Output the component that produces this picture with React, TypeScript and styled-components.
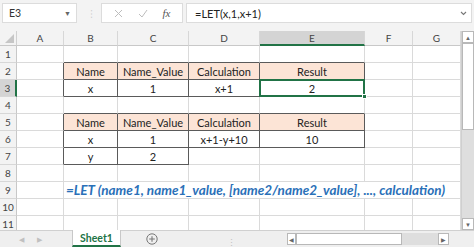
import React from 'react'
import styled, { createGlobalStyle } from 'styled-components'

const GlobalStyle = createGlobalStyle`
    html, body { margin: 0; padding: 0; background: #fff; }
    body { font-family: 'Lato', 'Liberation Sans', sans-serif; }
`

const GREEN = '#217346'
const GRID = '#dadada'
const DARK = '#5a5a5a'

const COLS = ['A', 'B', 'C', 'D', 'E', 'F', 'G']
const WIDTHS = [47, 54, 71, 71, 105, 48, 48]
const ROWS = 11

interface CellData {
    v: string
    head?: boolean
}

const CELLS: Record<string, CellData> = {
    B2: { v: 'Name', head: true },
    C2: { v: 'Name_Value', head: true },
    D2: { v: 'Calculation', head: true },
    E2: { v: 'Result', head: true },
    B3: { v: 'x' },
    C3: { v: '1' },
    D3: { v: 'x+1' },
    E3: { v: '2' },
    B5: { v: 'Name', head: true },
    C5: { v: 'Name_Value', head: true },
    D5: { v: 'Calculation', head: true },
    E5: { v: 'Result', head: true },
    B6: { v: 'x' },
    C6: { v: '1' },
    D6: { v: 'x+1-y+10' },
    E6: { v: '10' },
    B7: { v: 'y' },
    C7: { v: '2' },
}

const SYNTAX = '=LET (name1, name1_value, [name2/name2_value], ..., calculation)'

// col index: 0 = A
const boxed = (r: number, c: number): boolean =>
    ((r === 2 || r === 3 || r === 5 || r === 6) && c >= 1 && c <= 4) ||
    (r === 7 && c >= 1 && c <= 2)

const Screen = styled('div')`
    width: 474px;
    height: 247px;
    display: flex;
    flex-direction: column;
    overflow: hidden;
    background: #f3f3f3;
`

const FormulaBar = styled('div')`
    display: flex;
    align-items: center;
    height: 20px;
    padding: 3px 2px 8px 2px;
    gap: 3px;
`

const NameBox = styled('div')`
    width: 75px;
    height: 20px;
    box-sizing: border-box;
    background: #fff;
    border: 1px solid #dcdcdc;
    display: flex;
    align-items: center;
    justify-content: space-between;
    padding: 0 5px 0 6px;
    font-size: 10.5px;
    color: #333;
`

const Caret = styled('span')`
    font-size: 7px;
    color: #666;
`

const Grip = styled('div')`
    width: 18px;
    display: flex;
    justify-content: center;
    color: #c4c4c4;
    font-size: 10px;
    letter-spacing: -1px;
    writing-mode: vertical-rl;
`

const ActionBox = styled('div')`
    width: 82px;
    height: 20px;
    box-sizing: border-box;
    background: #fff;
    border: 1px solid #dcdcdc;
    display: flex;
    align-items: center;
    justify-content: space-around;
    padding: 0 4px;
`

const FxLabel = styled('span')`
    font-family: 'Liberation Serif', serif;
    font-style: italic;
    font-size: 11px;
    color: #555;
`

const FormulaInput = styled('div')`
    flex: 1;
    height: 20px;
    box-sizing: border-box;
    background: #fff;
    border: 1px solid #dcdcdc;
    display: flex;
    align-items: center;
    justify-content: space-between;
    padding: 0 4px 0 8px;
    font-size: 11px;
    color: #222;
`

const Main = styled('div')`
    display: flex;
    height: 199px;
    overflow: hidden;
`

const Sheet = styled('div')`
    display: grid;
    grid-template-columns: 17px ${WIDTHS.map((w) => `${w}px`).join(' ')};
    grid-template-rows: 15px repeat(${ROWS}, 17px);
    width: 461px;
    background: #fff;
    overflow: hidden;
`

const Corner = styled('div')`
    background: #f3f3f3;
    border-right: 1px solid #d0d0d0;
    border-bottom: 1px solid #c8c8c8;
    position: relative;
    &::after {
        content: '';
        position: absolute;
        right: 2px;
        bottom: 2px;
        border-left: 9px solid transparent;
        border-bottom: 9px solid #c6c6c6;
    }
`

const ColHead = styled('div')<{ $active?: boolean }>`
    background: ${({ $active }): string => ($active ? '#d4d4d4' : '#f3f3f3')};
    border-right: 1px solid #d7d7d7;
    border-bottom: ${({ $active }): string => ($active ? `2px solid ${GREEN}` : '1px solid #c8c8c8')};
    display: flex;
    align-items: center;
    justify-content: center;
    font-size: 10px;
    color: #444;
`

const RowHead = styled('div')<{ $active?: boolean }>`
    background: ${({ $active }): string => ($active ? '#d4d4d4' : '#f3f3f3')};
    border-right: ${({ $active }): string => ($active ? `2px solid ${GREEN}` : '1px solid #c8c8c8')};
    border-bottom: 1px solid #d7d7d7;
    display: flex;
    align-items: center;
    justify-content: center;
    font-size: 10px;
    color: #444;
`

const Cell = styled('div')<{ $fill?: boolean; $right: string; $bottom: string; $selected?: boolean }>`
    position: relative;
    background: ${({ $fill }): string => ($fill ? '#fce4d6' : 'transparent')};
    border-right: 1px solid ${({ $right }): string => $right};
    border-bottom: 1px solid ${({ $bottom }): string => $bottom};
    display: flex;
    align-items: center;
    justify-content: center;
    font-size: 11px;
    color: #222;
    white-space: nowrap;
    &::after {
        content: '';
        display: ${({ $selected }): string => ($selected ? 'block' : 'none')};
        position: absolute;
        inset: -1px -1px -1px -1px;
        border: 2px solid ${GREEN};
        z-index: 1;
    }
    &::before {
        content: '';
        display: ${({ $selected }): string => ($selected ? 'block' : 'none')};
        position: absolute;
        right: -3px;
        bottom: -3px;
        width: 5px;
        height: 5px;
        background: ${GREEN};
        border: 1px solid #fff;
        box-sizing: border-box;
        z-index: 2;
    }
`

const SyntaxCell = styled('div')`
    grid-column: span 6;
    border-right: 1px solid ${GRID};
    border-bottom: 1px solid ${GRID};
    display: flex;
    align-items: center;
    padding-left: 2px;
    font-size: 13.5px;
    font-weight: 700;
    font-style: italic;
    color: #2a70b8;
    white-space: nowrap;
`

const VScroll = styled('div')`
    width: 13px;
    display: flex;
    flex-direction: column;
    background: #dedede;
    border-left: 1px solid #cfcfcf;
    box-sizing: border-box;
`

const ArrowBox = styled('div')<{ $w?: number; $h?: number }>`
    width: ${({ $w }): string => ($w ? `${$w}px` : 'auto')};
    height: ${({ $h }): string => ($h ? `${$h}px` : 'auto')};
    box-sizing: border-box;
    background: #fff;
    border: 1px solid #b8b8b8;
    display: flex;
    align-items: center;
    justify-content: center;
    font-size: 6px;
    color: #666;
    flex-shrink: 0;
`

const VThumb = styled('div')`
    height: 87px;
    background: #fff;
    border: 1px solid #b8b8b8;
    box-sizing: border-box;
`

const Spacer = styled('div')`
    flex: 1;
`

const TabBar = styled('div')`
    display: flex;
    align-items: stretch;
    height: 17px;
    background: #efefef;
    border-top: 1px solid #d0d0d0;
    box-sizing: border-box;
`

const NavArrows = styled('div')`
    width: 72px;
    display: flex;
    align-items: center;
    gap: 13px;
    padding-left: 19px;
    box-sizing: border-box;
    font-size: 7px;
    color: #c0c0c0;
`

const SheetTab = styled('div')`
    width: 49px;
    background: #fff;
    border-left: 1px solid #c8c8c8;
    border-right: 1px solid #c8c8c8;
    border-bottom: 2px solid ${GREEN};
    box-sizing: border-box;
    display: flex;
    align-items: center;
    justify-content: center;
    margin-top: -1px;
    font-size: 10.5px;
    font-weight: 700;
    color: ${GREEN};
`

const AddSheet = styled('div')`
    width: 62px;
    display: flex;
    align-items: center;
    justify-content: center;
`

const TabGrip = styled('div')`
    width: 104px;
    display: flex;
    align-items: center;
    justify-content: flex-end;
    padding-right: 8px;
    box-sizing: border-box;
    color: #c4c4c4;
    font-size: 9px;
    writing-mode: vertical-rl;
`

const HScroll = styled('div')`
    width: 162px;
    height: 12px;
    align-self: center;
    display: flex;
    background: #dedede;
`

const HThumb = styled('div')`
    width: 106px;
    background: #fff;
    border: 1px solid #b8b8b8;
    box-sizing: border-box;
`

const PlusIcon = (): JSX.Element => (
    <svg width="12" height="12" viewBox="0 0 12 12">
        <circle cx="6" cy="6" r="5.2" fill="none" stroke="#777" strokeWidth="1" />
        <path d="M6 3.2v5.6M3.2 6h5.6" stroke="#777" strokeWidth="1.1" />
    </svg>
)

const CrossIcon = (): JSX.Element => (
    <svg width="9" height="9" viewBox="0 0 9 9">
        <path d="M1 1l7 7M8 1l-7 7" stroke="#bdbdbd" strokeWidth="1" />
    </svg>
)

const CheckIcon = (): JSX.Element => (
    <svg width="10" height="9" viewBox="0 0 10 9">
        <path d="M1 5l3 3 5-7" fill="none" stroke="#bdbdbd" strokeWidth="1" />
    </svg>
)

const Chevron = (): JSX.Element => (
    <svg width="7" height="5" viewBox="0 0 7 5">
        <path d="M1 1l2.5 2.5L6 1" fill="none" stroke="#777" strokeWidth="1.1" />
    </svg>
)

const App = (): JSX.Element => {
    const cells: JSX.Element[] = []
    for (let r = 1; r <= ROWS; r++) {
        cells.push(
            <RowHead key={`h${r}`} $active={r === 3}>
                {r}
            </RowHead>,
        )
        for (let c = 0; c < COLS.length; c++) {
            if (r === 9 && c === 1) {
                cells.push(<SyntaxCell key="syntax">{SYNTAX}</SyntaxCell>)
                c = COLS.length
                continue
            }
            const id = `${COLS[c]}${r}`
            const data = CELLS[id]
            const right = boxed(r, c) || boxed(r, c + 1) ? DARK : GRID
            const bottom = boxed(r, c) || boxed(r + 1, c) ? DARK : GRID
            cells.push(
                <Cell key={id} $fill={data?.head} $right={right} $bottom={bottom} $selected={id === 'E3'}>
                    {data?.v}
                </Cell>,
            )
        }
    }

    return (
        <Screen>
            <GlobalStyle />
            <FormulaBar>
                <NameBox>
                    E3
                    <Caret>▼</Caret>
                </NameBox>
                <Grip>⋯</Grip>
                <ActionBox>
                    <CrossIcon />
                    <CheckIcon />
                    <FxLabel>fx</FxLabel>
                </ActionBox>
                <FormulaInput>
                    =LET(x,1,x+1)
                    <Chevron />
                </FormulaInput>
            </FormulaBar>
            <Main>
                <Sheet>
                    <Corner />
                    {COLS.map((c) => (
                        <ColHead key={c} $active={c === 'E'}>
                            {c}
                        </ColHead>
                    ))}
                    {cells}
                </Sheet>
                <VScroll>
                    <ArrowBox $h={12}>▲</ArrowBox>
                    <VThumb />
                    <Spacer />
                    <ArrowBox $h={12}>▼</ArrowBox>
                </VScroll>
            </Main>
            <TabBar>
                <NavArrows>
                    <span>◀</span>
                    <span>▶</span>
                </NavArrows>
                <SheetTab>Sheet1</SheetTab>
                <AddSheet>
                    <PlusIcon />
                </AddSheet>
                <TabGrip>⋯</TabGrip>
                <HScroll>
                    <ArrowBox $w={9}>◀</ArrowBox>
                    <HThumb />
                    <Spacer />
                    <ArrowBox $w={11}>▶</ArrowBox>
                </HScroll>
            </TabBar>
        </Screen>
    )
}

export default App
